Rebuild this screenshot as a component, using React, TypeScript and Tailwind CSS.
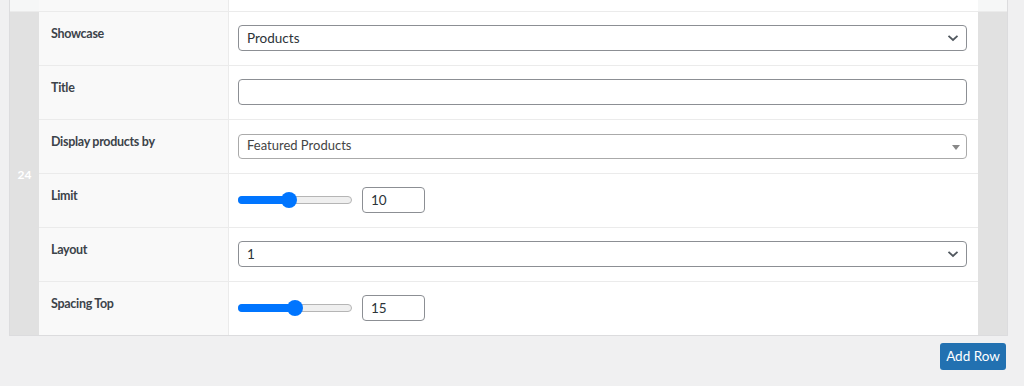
import React from "react";

const font = {
  fontFamily: 'Lato, "Noto Sans", "Liberation Sans", sans-serif',
};

function Chevron() {
  return (
    <svg
      width="12"
      height="8"
      viewBox="0 0 12 8"
      className="absolute right-[7px] top-1/2 -translate-y-1/2"
    >
      <path
        d="M1.5 1.8 L6 6 L10.5 1.8"
        fill="none"
        stroke="#50575e"
        strokeWidth="1.8"
      />
    </svg>
  );
}

function Select({ value }: { value: string }) {
  return (
    <div className="relative flex h-[26px] w-full items-center rounded-[4px] border border-[#8c8f94] bg-white pl-[8px] text-[13.5px] text-[#2c3338]">
      {value}
      <Chevron />
    </div>
  );
}

function Select2({ value }: { value: string }) {
  return (
    <div className="relative flex h-[25px] w-full items-center rounded-[4px] border border-[#aaaaaa] bg-white pl-[8px] text-[13px] text-[#444]">
      {value}
      <span className="absolute right-[6px] top-[10px] h-0 w-0 border-x-[4px] border-t-[5px] border-x-transparent border-t-[#888]" />
    </div>
  );
}

function Slider({
  value,
  pos,
}: {
  value: string;
  pos: number;
}) {
  return (
    <div className="flex items-center">
      <div className="relative h-[16px] w-[114px]">
        <div className="absolute left-0 right-0 top-[4px] h-[8px] rounded-full border border-[#b5b5b5] bg-[#efefef]" />
        <div
          className="absolute left-0 top-[4px] h-[8px] rounded-full bg-[#0075ff]"
          style={{ width: pos }}
        />
        <div
          className="absolute top-0 h-[16px] w-[16px] rounded-full bg-[#0075ff]"
          style={{ left: pos - 8 }}
        />
      </div>
      <div className="ml-[10px] flex h-[26px] w-[63px] items-center rounded-[4px] border border-[#8c8f94] bg-white pl-[8px] text-[13.5px] text-[#2c3338]">
        {value}
      </div>
    </div>
  );
}

function Row({
  label,
  children,
}: {
  label: string;
  children?: React.ReactNode;
}) {
  return (
    <div className="flex h-[54px] border-t border-[#ebebeb]">
      <div className="w-[190px] shrink-0 border-r border-[#ebebeb] bg-[#f9f9f9] pl-[12px] pt-[12px] text-[12.5px] leading-[19px] font-bold tracking-[-0.3px] text-[#3c434a]">
        {label}
      </div>
      <div className="flex flex-1 items-center bg-white pb-[1px] pl-[9px] pr-[11px]">
        {children}
      </div>
    </div>
  );
}

export default function App() {
  return (
    <main
      className="h-[386px] w-[1024px] overflow-hidden bg-[#f0f0f1]"
      style={font}
    >
      <div className="ml-[9px] w-[999px] border-x border-b border-[#dcdcde]">

        {/* previous row */}

        <div className="flex h-[11px]">
          <div className="w-[29px] bg-[#f6f7f7]" />
          <div className="w-[190px] border-r border-[#ebebeb] bg-[#f9f9f9]" />
          <div className="flex-1 bg-white" />
          <div className="w-[29px] bg-[#f6f7f7]" />
        </div>

        {/* row 24 */}

        <div className="flex">
          <div className="flex w-[29px] shrink-0 items-center justify-center border-t border-[#ebebeb] bg-[#e1e1e1] pt-[2px] text-[12px] font-bold text-white">
            24
          </div>

          <div className="flex-1">
            <Row label="Showcase">
              <Select value="Products" />
            </Row>

            <Row label="Title">
              <div className="h-[26px] w-full rounded-[4px] border border-[#8c8f94] bg-white" />
            </Row>

            <Row label="Display products by">
              <Select2 value="Featured Products" />
            </Row>

            <Row label="Limit">
              <Slider value="10" pos={51} />
            </Row>

            <Row label="Layout">
              <Select value="1" />
            </Row>

            <Row label="Spacing Top">
              <Slider value="15" pos={57} />
            </Row>
          </div>

          <div className="w-[29px] shrink-0 border-t border-[#ebebeb] bg-[#e1e1e1]" />
        </div>
      </div>

      <div className="mr-[18px] mt-[7px] flex justify-end">
        <button className="flex h-[27px] w-[66px] items-center justify-center rounded-[3px] bg-[#2271b1] text-[13.5px] text-white">
          Add Row
        </button>
      </div>
    </main>
  );
}
